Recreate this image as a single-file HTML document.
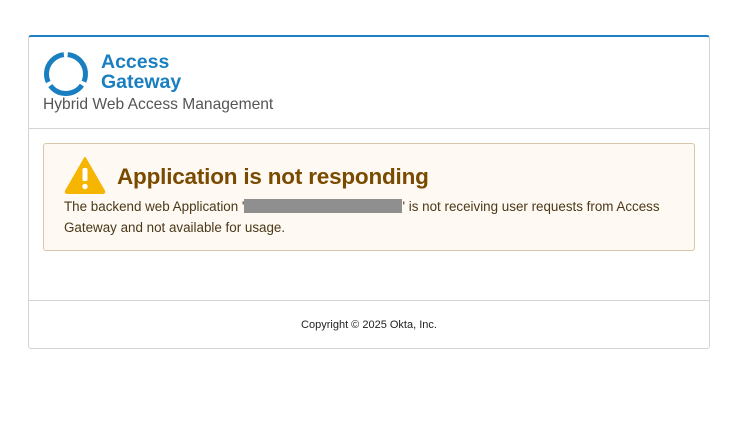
<!DOCTYPE html>
<html><head><meta charset="utf-8"><style>
*{margin:0;padding:0;box-sizing:border-box}
body{width:755px;height:421px;background:#fff;font-family:"Liberation Sans",sans-serif;position:relative;overflow:hidden}
.card{position:absolute;left:28px;top:35px;width:682px;height:314px;border:1px solid #d4d4d4;border-top:2px solid #1f7fc4;border-radius:3px}
.hdr{position:absolute;left:0;top:0;width:100%;height:92px;border-bottom:1px solid #d4d4d4}
.brand{position:absolute;left:72px;top:15px;color:#1a7fc1;font-size:19.5px;line-height:20px;font-weight:bold}
.sub{position:absolute;left:14px;top:59px;color:#555;font-size:15.6px}
.alert{position:absolute;left:14px;top:106px;width:652px;height:108px;background:#fef9f2;border:1px solid #d8c7a6;border-radius:3px}
.title{position:absolute;left:73px;top:20px;color:#7a4a00;font-size:22.5px;font-weight:bold;letter-spacing:-0.2px}
.msg{position:absolute;left:20px;top:52px;width:630px;color:#4a3818;font-size:13.4px;line-height:21px}
.red{display:inline-block;width:158px;height:14px;background:#8f8f8f;vertical-align:-2px}
.ftr{position:absolute;left:0;top:263px;width:100%;border-top:1px solid #d4d4d4;text-align:center;font-size:11px;color:#222;padding-top:18px}
</style></head><body>
<div class="card">
 <div class="hdr">
  <svg style="position:absolute;left:14px;top:14px" width="46" height="46" viewBox="0 0 46 46">
   <circle cx="23" cy="23" r="19.5" fill="none" stroke="#1a7fc1" stroke-width="5" stroke-dasharray="36.8 4.05" transform="rotate(-85 23 23)"/>
  </svg>
  <div class="brand">Access<br>Gateway</div>
  <div class="sub">Hybrid Web Access Management</div>
 </div>
 <div class="alert">
  <svg style="position:absolute;left:20px;top:12px" width="42" height="38" viewBox="0 0 42 38">
   <path d="M21 2 L40 35 Q41 37 38.5 37 L3.5 37 Q1 37 2 35 Z" fill="#f6b500" stroke="#f6b500" stroke-width="2" stroke-linejoin="round"/>
   <rect x="18.5" y="12" width="5" height="13" rx="1.5" fill="#fff"/>
   <circle cx="21" cy="30.5" r="2.7" fill="#fff"/>
  </svg>
  <div class="title">Application is not responding</div>
  <div class="msg">The backend web Application '<span class="red"></span>' is not receiving user requests from Access Gateway and not available for usage.</div>
 </div>
 <div class="ftr">Copyright © 2025 Okta, Inc.</div>
</div>
</body></html>
